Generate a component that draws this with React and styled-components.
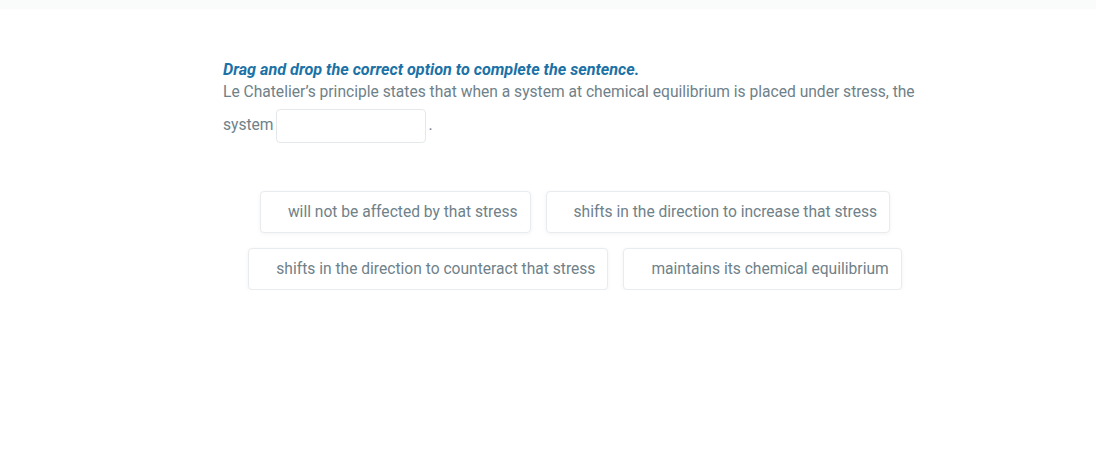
import React from 'react'
import styled, { createGlobalStyle } from 'styled-components'

const GlobalStyle = createGlobalStyle`
	html, body {
		margin: 0;
		padding: 0;
		background: #ffffff;
		font-family: Roboto, 'Open Sans', sans-serif;
	}
`

const options = [
	['will not be affected by that stress', 'shifts in the direction to increase that stress'],
	['shifts in the direction to counteract that stress', 'maintains its chemical equilibrium'],
]

const App = () => {
	return (
		<>
			<GlobalStyle />
			<TopBar />
			<Page>
				<Question>
					<Instruction>Drag and drop the correct option to complete the sentence.</Instruction>
					<Sentence>
						Le Chatelier’s principle states that when a system at chemical equilibrium is placed under
						stress, the system <Blank />
						<Period>.</Period>
					</Sentence>
				</Question>

				<Options>
					{options.map((row, i) => (
						<OptionRow key={i}>
							{row.map((text) => (
								<Chip key={text}>{text}</Chip>
							))}
						</OptionRow>
					))}
				</Options>
			</Page>
		</>
	)
}

export default App

const TopBar = styled.div`
	height: 9px;
	background-color: #fafcfc;
`

const Page = styled.div`
	width: 704px;
	margin-left: 223px;
	padding-top: 51px;
`

const Question = styled.div`
	display: flex;
	flex-direction: column;
`

const Instruction = styled.div`
	color: #1b72a6;
	font-size: 16.2px;
	font-weight: 700;
	font-style: italic;
	line-height: 20px;
`

const Sentence = styled.div`
	color: #6f8189;
	font-size: 15.6px;
	line-height: 33px;
	margin-top: -4px;
`

const Blank = styled.span`
	display: inline-block;
	width: 148px;
	height: 32px;
	border: 1px solid #e4e8ea;
	border-radius: 4px;
	vertical-align: middle;
	margin-left: -1px;
	box-sizing: content-box;
`

const Period = styled.span`
	margin-left: 2px;
`

const Options = styled.div`
	display: flex;
	flex-direction: column;
	align-items: center;
	gap: 15px;
	margin-top: 48px;
`

const OptionRow = styled.div`
	display: flex;
	gap: 15px;
`

const Chip = styled.div`
	height: 40px;
	display: flex;
	align-items: center;
	padding: 0 12px 0 27px;
	border: 1px solid #e8ecee;
	border-radius: 4px;
	background: #ffffff;
	box-shadow: 0 1px 4px rgba(0, 0, 0, 0.05);
	color: #6f8189;
	font-size: 15.6px;
	white-space: nowrap;
`
